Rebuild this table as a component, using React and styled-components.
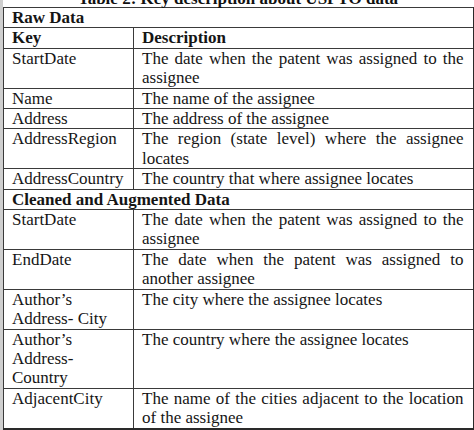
import React from "react";
import styled, { createGlobalStyle } from "styled-components";

const Global = createGlobalStyle`
  html, body { margin: 0; padding: 0; background: #ffffff; }
  body { font-family: "Liberation Serif", "Times New Roman", serif; color: #151515; }
`;

const Page = styled.div`
  width: 471px;
  height: 430px;
  overflow: hidden;
  border-left: 3px solid #cfcfcf;
`;

const Title = styled.div`
  width: 470px;
  margin-top: -11px;
  height: 18px;
  font-size: 17px;
  line-height: 19px;
  font-weight: bold;
  text-align: center;
  color: #111;
`;

const Table = styled.table`
  width: 470px;
  table-layout: fixed;
  border-collapse: collapse;
  border-top: 1px solid #3a3a3a;
  border-left: 1px solid #3a3a3a;
  border-right: 2px solid #2a2a2a;
  border-bottom: 2px solid #2a2a2a;
  font-size: 17px;
  line-height: 19.4px;
`;

const Cell = styled.td`
  border: 1px solid #3a3a3a;
  padding: 0 9px 0 8px;
  vertical-align: top;
  font-weight: ${(p) => (p.$bold ? "bold" : "normal")};
  text-align: ${(p) => (p.$justify ? "justify" : "left")};
  color: #151515;
`;

const raw = [
  ["StartDate", "The date when the patent was assigned to the assignee"],
  ["Name", "The name of the assignee"],
  ["Address", "The address of the assignee"],
  ["AddressRegion", "The region (state level) where the assignee locates"],
  ["AddressCountry", "The country that where assignee locates"],
];

const cleaned = [
  ["StartDate", "The date when the patent was assigned to the assignee"],
  ["EndDate", "The date when the patent was assigned to another assignee"],
  ["Author\u2019s Address- City", "The city where the assignee locates"],
  ["Author\u2019s Address-Country", "The country where the assignee locates"],
  ["AdjacentCity", "The name of the cities adjacent to the location of the assignee"],
];

const Row = ({ k, d }) => (
  <tr>
    <Cell>{k}</Cell>
    <Cell $justify>{d}</Cell>
  </tr>
);

export default function App() {
  return (
    <>
      <Global />
      <Page>
        <Title>Table 2: Key description about USPTO data</Title>
        <Table>
          <colgroup>
            <col style={{ width: "130px" }} />
            <col style={{ width: "340px" }} />
          </colgroup>
          <tbody>
            <tr>
              <Cell $bold colSpan={2}>Raw Data</Cell>
            </tr>
            <tr>
              <Cell $bold>Key</Cell>
              <Cell $bold>Description</Cell>
            </tr>
            {raw.map(([k, d], i) => (
              <Row key={"r" + i} k={k} d={d} />
            ))}
            <tr>
              <Cell $bold colSpan={2}>Cleaned and Augmented Data</Cell>
            </tr>
            {cleaned.map(([k, d], i) => (
              <Row key={"c" + i} k={k} d={d} />
            ))}
          </tbody>
        </Table>
      </Page>
    </>
  );
}
